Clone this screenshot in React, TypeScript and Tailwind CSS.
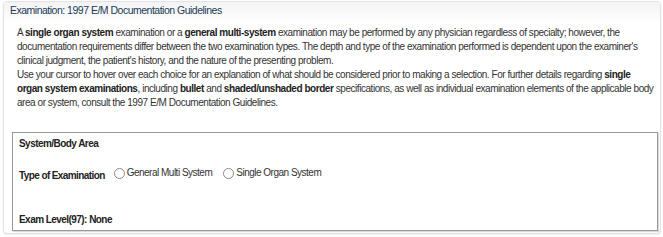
import { useState } from "react";

function Radio({ label, checked, onChange }: { label: string; checked: boolean; onChange: () => void }) {
  return (
    <label className="flex cursor-pointer items-center gap-[2px]">
      <span className="flex h-[11px] w-[11px] items-center justify-center rounded-full border border-[#8a8a8a] bg-white">
        {checked ? <span className="h-[5px] w-[5px] rounded-full bg-[#333]" /> : null}
      </span>
      <input type="radio" className="hidden" checked={checked} onChange={onChange} />
      <span className="text-[10px] leading-[14px] tracking-[-0.5px] text-[#333]">{label}</span>
    </label>
  );
}

export default function App() {
  const [type, setType] = useState<string | null>(null);

  return (
    <div className="h-[237px] w-[663px] bg-white pt-[1px] pr-[2px] pl-[3px] font-['Liberation_Sans',Arial,sans-serif]">
      <div className="h-[233px] rounded-[4px] border border-[#e2e2e2] bg-white shadow-[0_1px_2px_rgba(0,0,0,0.08)]">
        <div className="rounded-t-[4px] bg-[linear-gradient(#f3f3f6,#ffffff)] px-[6px] pt-[1px] pb-[6px] text-[10.5px] leading-[14px] tracking-[-0.5px] text-[#213a52]">
          Examination: 1997 E/M Documentation Guidelines
        </div>
        <div className="pt-[3px] pr-[6px] pl-[13px] text-[10px] leading-[14px] tracking-[-0.45px] text-[#333]">
          <p>
            A <b className="text-[#222]">single organ system</b> examination or a <b className="text-[#222]">general multi-system</b> examination may be performed by any physician regardless of specialty; however, the documentation requirements differ between the two examination types. The depth and type of the examination performed is dependent upon the examiner's clinical judgment, the patient's history, and the nature of the presenting problem.
          </p>
          <p>
            Use your cursor to hover over each choice for an explanation of what should be considered prior to making a selection. For further details regarding <b className="text-[#222]">single organ system examinations</b>, including <b className="text-[#222]">bullet</b> and <b className="text-[#222]">shaded/unshaded border</b> specifications, as well as individual examination elements of the applicable body area or system, consult the 1997 E/M Documentation Guidelines.
          </p>
        </div>
        <div className="mt-[22px] mr-[2px] ml-[8px] h-[99px] border border-[#999] bg-white px-[6px] pt-[4px] shadow-[1px_1px_1px_rgba(0,0,0,0.15)]">
          <div className="text-[10px] font-bold leading-[14px] tracking-[-0.55px] text-[#222]">System/Body Area</div>
          <div className="mt-[12px] flex items-center gap-[9px]">
            <span className="pt-[6px] text-[10px] font-bold leading-[14px] tracking-[-0.6px] text-[#222]">Type of Examination</span>
            <div className="flex items-center gap-[11px]">
              <Radio label="General Multi System" checked={type === "gms"} onChange={() => setType("gms")} />
              <Radio label="Single Organ System" checked={type === "sos"} onChange={() => setType("sos")} />
            </div>
          </div>
          <div className="mt-[30px] text-[10px] font-bold leading-[14px] tracking-[-0.55px] text-[#222]">Exam Level(97): None</div>
        </div>
      </div>
    </div>
  );
}
